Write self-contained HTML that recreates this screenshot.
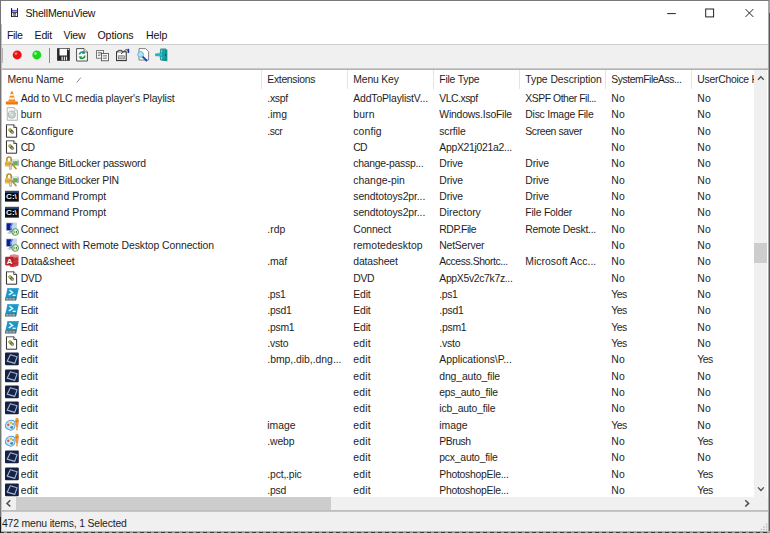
<!DOCTYPE html>
<html><head><meta charset="utf-8"><title>ShellMenuView</title>
<style>
html,body{margin:0;padding:0;}
body{width:770px;height:533px;overflow:hidden;position:relative;background:#fff;font-family:"Liberation Sans",sans-serif;color:#1e1e1e;}
.abs{position:absolute;}
.t{position:absolute;white-space:nowrap;line-height:1;font-size:10.4px;letter-spacing:-0.08px;}
.ic{position:absolute;width:13.8px;height:13.8px;}
.ic svg{width:100%;height:100%;display:block;overflow:visible;}
</style></head><body>

<div class="abs" style="left:0;top:0;width:770px;height:533px;background:#ffffff;"></div>
<div class="abs" style="left:10.8px;top:7.8px;width:7.4px;height:9.6px;"><svg viewBox="0 0 7.4 9.6" width="7.4" height="9.6" style="display:block"><rect x="0.6" y="1" width="6" height="8" fill="#fff"/><rect x="0.8" y="1.9" width="5.6" height="1.6" fill="#5c5ce0"/><rect x="0.8" y="3.9" width="5.6" height="0.9" fill="#20203a"/><rect x="0" y="0.1" width="1.1" height="9.2" fill="#16162a"/><rect x="6.1" y="0.1" width="1.1" height="9.2" fill="#16162a"/><rect x="2.1" y="5.6" width="3" height="2.6" fill="#8c8c8c"/><rect x="2.1" y="5.2" width="3" height="0.8" fill="#444"/><rect x="0" y="8.2" width="7.2" height="1.1" fill="#16162a"/></svg></div>
<div class="t" style="left:25.50px;top:8.00px;font-size:10.5px;letter-spacing:-0.189px;color:#111;">ShellMenuView</div>
<svg class="abs" style="left:650px;top:0" width="120" height="30" viewBox="0 0 120 30"><path d="M17.2 13.6 L25.8 13.6" stroke="#222" stroke-width="1"/><rect x="55.7" y="9.0" width="7.9" height="7.9" fill="none" stroke="#222" stroke-width="1"/><path d="M95.5 9.1 L103.3 16.9 M103.3 9.1 L95.5 16.9" stroke="#222" stroke-width="1"/></svg>
<div class="t" style="left:7.00px;top:30.00px;font-size:10.6px;letter-spacing:-0.418px;color:#111;">File</div>
<div class="t" style="left:34.60px;top:30.00px;font-size:10.6px;letter-spacing:-0.248px;color:#111;">Edit</div>
<div class="t" style="left:63.60px;top:30.00px;font-size:10.6px;letter-spacing:-0.263px;color:#111;">View</div>
<div class="t" style="left:97.40px;top:30.00px;font-size:10.6px;letter-spacing:-0.067px;color:#111;">Options</div>
<div class="t" style="left:146.00px;top:30.00px;font-size:10.6px;letter-spacing:-0.134px;color:#111;">Help</div>
<div class="abs" style="left:1px;top:44px;width:767px;height:1px;background:#cfcfcf;"></div>
<div class="abs" style="left:1px;top:45px;width:767px;height:23px;background:#f0f0f0;"></div>
<div class="abs" style="left:1px;top:68px;width:767px;height:1px;background:#c8c8c8;"></div><div class="abs" style="left:1px;top:69px;width:767px;height:1px;background:#b2b2b2;"></div>
<div class="abs" style="left:2.2px;top:47.6px;width:1px;height:15px;background:#b4b4b4;"></div>
<div class="abs" style="left:49.2px;top:47.6px;width:1px;height:15px;background:#8c8c8c;"></div>
<svg class="abs" style="left:0;top:45px" width="200" height="24" viewBox="0 45 200 24">
<circle cx="17.2" cy="54.9" r="4.5" fill="#ee1010"/><circle cx="15.9" cy="53.6" r="1.4" fill="#ff7d7d"/>
<circle cx="36.8" cy="54.9" r="4.5" fill="#17d81b"/><circle cx="35.5" cy="53.6" r="1.4" fill="#9dffa0"/>
<!-- save -->
<rect x="57.1" y="48.2" width="12.7" height="12.6" fill="#242424"/>
<rect x="59.5" y="48.8" width="7.5" height="6.7" fill="#fbfbfb"/>
<rect x="67.6" y="48.9" width="1.4" height="1.2" fill="#e8e8e8"/>
<rect x="61.5" y="56.6" width="1.3" height="3.7" fill="#e6e6e6"/><rect x="63.8" y="56.6" width="1.3" height="3.7" fill="#e6e6e6"/><rect x="66" y="56.6" width="1.1" height="3.7" fill="#e6e6e6"/>
<!-- refresh -->
<path d="M76.6 48.6 L84 48.6 L87.4 52 L87.4 61 L76.6 61 Z" fill="#ffffff" stroke="#3c3c3c" stroke-width="0.9"/>
<path d="M84 48.6 L84 52 L87.4 52" fill="#eee" stroke="#3c3c3c" stroke-width="0.7"/>
<path d="M79.4 54.6 A2.9 2.9 0 0 1 84 52.6" fill="none" stroke="#2b8fa3" stroke-width="1.7"/>
<path d="M84.8 55.4 A2.9 2.9 0 0 1 80 57.6" fill="none" stroke="#1f9a3c" stroke-width="1.7"/>
<path d="M83 50.6 L85.6 53.6 L82 54Z" fill="#1f9a3c"/><path d="M81 59.6 L78.4 56.6 L82 56.2Z" fill="#1f9a3c"/>
<!-- copy -->
<rect x="96.6" y="50.6" width="7" height="7.6" fill="#fff" stroke="#555" stroke-width="0.8"/>
<path d="M97.8 52.4 H102 M97.8 54 H102 M97.8 55.6 H100.4" stroke="#555" stroke-width="0.7"/>
<rect x="101.4" y="53.4" width="7" height="7.4" fill="#fff" stroke="#444" stroke-width="0.8"/>
<path d="M102.8 55.4 H107 M102.8 57 H107 M102.8 58.6 H107" stroke="#666" stroke-width="0.7"/>
<!-- properties -->
<rect x="116.6" y="51.8" width="9.6" height="8.8" fill="#fff" stroke="#222" stroke-width="1"/>
<path d="M118 51.8 L118 50.4 L122 50.4 L122 51.8" fill="#ddd" stroke="#222" stroke-width="0.8"/>
<rect x="118.4" y="55.8" width="6" height="3.2" fill="#bbb" stroke="#555" stroke-width="0.5"/>
<path d="M121 54 L126 49.6 L128.6 50.4" fill="none" stroke="#444" stroke-width="1"/>
<rect x="127.6" y="48.8" width="1.6" height="4.2" fill="#1b2fb0"/>
<!-- find -->
<path d="M139 48.6 L145.6 48.6 L148.6 51.6 L148.6 60 L139 60 Z" fill="#ffffff" stroke="#666" stroke-width="0.8"/>
<circle cx="140.6" cy="54.4" r="2.9" fill="#a9e6f2" stroke="#5aa7bf" stroke-width="0.8"/>
<path d="M142.6 56.6 L147 61" stroke="#1c45c8" stroke-width="2"/>
<!-- exit -->
<path d="M161.6 49 L167.4 49.8 L167.4 61.4 L161.6 60.2Z" fill="#17a3a8"/>
<path d="M160.6 49 L166 49 L166 60 L160.6 60Z" fill="none" stroke="#0c6f74" stroke-width="0.8"/>
<path d="M155.6 53.8 L160 53.8 L160 51.8 L163.4 54.8 L160 57.8 L160 55.8 L155.6 55.8Z" fill="#1fc2c8" stroke="#0d7f85" stroke-width="0.5"/>
<rect x="165" y="54" width="1" height="2" fill="#064f54"/>
</svg>
<div class="t" style="left:7.40px;top:75.00px;font-size:10.4px;letter-spacing:-0.032px;">Menu Name</div>
<svg class="abs" style="left:76px;top:76px" width="8" height="8" viewBox="0 0 8 8"><path d="M0.8 6.3 L4.8 1.6" stroke="#7c7c7c" stroke-width="0.9"/></svg>
<div class="abs" style="left:261.0px;top:70px;width:1px;height:19.4px;background:#e4e4e4;"></div>
<div class="t" style="left:267.30px;top:75.00px;font-size:10.4px;letter-spacing:-0.310px;">Extensions</div>
<div class="abs" style="left:347.0px;top:70px;width:1px;height:19.4px;background:#e4e4e4;"></div>
<div class="t" style="left:353.30px;top:75.00px;font-size:10.4px;letter-spacing:-0.172px;">Menu Key</div>
<div class="abs" style="left:433.0px;top:70px;width:1px;height:19.4px;background:#e4e4e4;"></div>
<div class="t" style="left:439.30px;top:75.00px;font-size:10.4px;letter-spacing:-0.216px;">File Type</div>
<div class="abs" style="left:519.0px;top:70px;width:1px;height:19.4px;background:#e4e4e4;"></div>
<div class="t" style="left:525.30px;top:75.00px;font-size:10.4px;letter-spacing:-0.066px;">Type Description</div>
<div class="abs" style="left:605.0px;top:70px;width:1px;height:19.4px;background:#e4e4e4;"></div>
<div class="t" style="left:611.30px;top:75.00px;font-size:10.4px;letter-spacing:-0.458px;">SystemFileAss...</div>
<div class="abs" style="left:691.0px;top:70px;width:1px;height:19.4px;background:#e4e4e4;"></div>
<div class="t" style="left:697.30px;top:75.00px;font-size:10.4px;letter-spacing:-0.272px;">UserChoice H</div>
<div class="ic" style="left:5.1px;top:90.90px;"><svg viewBox="0 0 16 16"><path d="M8 0.2 Q9 0.2 9.3 1.6 L12.3 12.4 L3.7 12.4 L6.7 1.6 Q7 0.2 8 0.2Z" fill="#f08a1c"/><path d="M6.3 3.4 L9.7 3.4 L10.3 5.4 L5.7 5.4Z" fill="#fdf1e2"/><path d="M5.1 7.6 L10.9 7.6 L11.5 9.8 L4.5 9.8Z" fill="#fdf1e2"/><path d="M1.8 12.2 L14.2 12.2 Q15 12.2 15 13 L15 15 Q15 15.8 14.2 15.8 L1.8 15.8 Q1 15.8 1 15 L1 13 Q1 12.2 1.8 12.2Z" fill="#e8780c"/><path d="M3.4 12.2 L12.6 12.2 L12.6 13.1 L3.4 13.1Z" fill="#f4a552"/></svg></div>
<div class="t" style="left:20.70px;top:94.00px;font-size:10.4px;letter-spacing:-0.135px;">Add to VLC media player's Playlist</div>
<div class="t" style="left:267.30px;top:94.00px;font-size:10.4px;letter-spacing:-0.269px;">.xspf</div>
<div class="t" style="left:353.30px;top:94.00px;font-size:10.4px;letter-spacing:-0.140px;">AddToPlaylistV...</div>
<div class="t" style="left:439.30px;top:94.00px;font-size:10.4px;letter-spacing:-0.489px;">VLC.xspf</div>
<div class="t" style="left:525.30px;top:94.00px;font-size:10.4px;letter-spacing:-0.457px;">XSPF Other Fil...</div>
<div class="t" style="left:611.30px;top:94.00px;font-size:10.4px;letter-spacing:0.222px;">No</div>
<div class="t" style="left:697.30px;top:94.00px;font-size:10.4px;letter-spacing:0.222px;">No</div>
<div class="ic" style="left:5.1px;top:107.23px;"><svg viewBox="0 0 16 16"><path d="M2.6 0.7 L10.8 0.7 L14.4 4.3 L14.4 15.4 L2.6 15.4 Z" fill="#f7f7f7" stroke="#a3a3a3" stroke-width="0.9"/><path d="M10.8 0.7 L10.8 4.3 L14.4 4.3" fill="#ececec" stroke="#b5b5b5" stroke-width="0.7"/><circle cx="7.9" cy="8.8" r="4.3" fill="#d0d3d5" stroke="#9ea3a6" stroke-width="0.8"/><circle cx="7.9" cy="8.8" r="1.4" fill="#ffffff" stroke="#a8a8a8" stroke-width="0.5"/><path d="M9.9 5.6 A4.3 4.3 0 0 1 12.1 8.8 L9.3 8.8Z" fill="#a9d4aa" opacity="0.8"/><path d="M4 7 A4.3 4.3 0 0 1 6.4 4.8 L7.4 7.6Z" fill="#ffffff" opacity="0.6"/></svg></div>
<div class="t" style="left:20.70px;top:110.00px;font-size:10.4px;letter-spacing:0.122px;">burn</div>
<div class="t" style="left:267.30px;top:110.00px;font-size:10.4px;letter-spacing:0.010px;">.img</div>
<div class="t" style="left:353.30px;top:110.00px;font-size:10.4px;letter-spacing:0.122px;">burn</div>
<div class="t" style="left:439.30px;top:110.00px;font-size:10.4px;letter-spacing:-0.202px;">Windows.IsoFile</div>
<div class="t" style="left:525.30px;top:110.00px;font-size:10.4px;letter-spacing:-0.227px;">Disc Image File</div>
<div class="t" style="left:611.30px;top:110.00px;font-size:10.4px;letter-spacing:0.222px;">No</div>
<div class="t" style="left:697.30px;top:110.00px;font-size:10.4px;letter-spacing:0.222px;">No</div>
<div class="ic" style="left:5.1px;top:123.57px;"><svg viewBox="0 0 16 16"><path d="M1.7 0.8 L10.2 0.8 L13.5 4.1 L13.5 15.3 L1.7 15.3 Z" fill="#ffffff" stroke="#2b2b2b" stroke-width="1.15"/><path d="M1.7 0.8 L10.2 0.8" stroke="#9a9a9a" stroke-width="1.2"/><path d="M10.2 0.8 L10.2 4.1 L13.5 4.1" fill="#fff" stroke="#2b2b2b" stroke-width="1"/><path d="M4.4 5.6 L6.8 5.2 L10.4 9 L9.6 11.2 L7.4 11 L4 7.6Z" fill="#5f5c24"/><circle cx="5.6" cy="6.7" r="1.6" fill="#b9b13a"/><path d="M7.4 8.6 L9.2 10.4" stroke="#bdbdbd" stroke-width="1.3"/></svg></div>
<div class="t" style="left:20.70px;top:127.00px;font-size:10.4px;letter-spacing:0.107px;">C&amp;onfigure</div>
<div class="t" style="left:267.30px;top:127.00px;font-size:10.4px;letter-spacing:-0.452px;">.scr</div>
<div class="t" style="left:353.30px;top:127.00px;font-size:10.4px;letter-spacing:0.111px;">config</div>
<div class="t" style="left:439.30px;top:127.00px;font-size:10.4px;letter-spacing:-0.119px;">scrfile</div>
<div class="t" style="left:525.30px;top:127.00px;font-size:10.4px;letter-spacing:-0.374px;">Screen saver</div>
<div class="t" style="left:611.30px;top:127.00px;font-size:10.4px;letter-spacing:0.222px;">No</div>
<div class="t" style="left:697.30px;top:127.00px;font-size:10.4px;letter-spacing:0.222px;">No</div>
<div class="ic" style="left:5.1px;top:139.90px;"><svg viewBox="0 0 16 16"><path d="M1.7 0.8 L10.2 0.8 L13.5 4.1 L13.5 15.3 L1.7 15.3 Z" fill="#ffffff" stroke="#2b2b2b" stroke-width="1.15"/><path d="M1.7 0.8 L10.2 0.8" stroke="#9a9a9a" stroke-width="1.2"/><path d="M10.2 0.8 L10.2 4.1 L13.5 4.1" fill="#fff" stroke="#2b2b2b" stroke-width="1"/><path d="M4.4 5.6 L6.8 5.2 L10.4 9 L9.6 11.2 L7.4 11 L4 7.6Z" fill="#5f5c24"/><circle cx="5.6" cy="6.7" r="1.6" fill="#b9b13a"/><path d="M7.4 8.6 L9.2 10.4" stroke="#bdbdbd" stroke-width="1.3"/></svg></div>
<div class="t" style="left:20.70px;top:143.00px;font-size:10.4px;letter-spacing:-0.708px;">CD</div>
<div class="t" style="left:353.30px;top:143.00px;font-size:10.4px;letter-spacing:-0.708px;">CD</div>
<div class="t" style="left:439.30px;top:143.00px;font-size:10.4px;letter-spacing:-0.284px;">AppX21j021a2...</div>
<div class="t" style="left:611.30px;top:143.00px;font-size:10.4px;letter-spacing:0.222px;">No</div>
<div class="t" style="left:697.30px;top:143.00px;font-size:10.4px;letter-spacing:0.222px;">No</div>
<div class="ic" style="left:5.1px;top:156.23px;"><svg viewBox="0 0 16 16"><path d="M2.2 6.8 L2.2 3.7 A2.5 2.5 0 0 1 7.2 3.7 L7.2 6.8" fill="none" stroke="#b58f35" stroke-width="1.9"/><rect x="-0.1" y="6.2" width="8.5" height="6" rx="0.7" fill="#e6bd45"/><rect x="-0.1" y="8.6" width="8.5" height="1.1" fill="#c4952a"/><rect x="8.3" y="3.6" width="7.5" height="8" rx="1" fill="#c3cacf"/><rect x="8.3" y="3.6" width="7.5" height="2.2" rx="1" fill="#e3e7ea"/><rect x="9.6" y="6.2" width="4.8" height="4.2" fill="#62b14f"/><rect x="14.6" y="5.2" width="1.2" height="6" fill="#8d979d"/><path d="M8.4 8.2 L14 14.8 L12.4 15.6 L7.6 10Z" fill="#b48d2a"/><path d="M5.2 9.6 L7.8 9.6 L7.6 15.4 L5.6 15.9 L4.9 13Z" fill="#d2d2d2" stroke="#7f7f7f" stroke-width="0.5"/></svg></div>
<div class="t" style="left:20.70px;top:159.00px;font-size:10.4px;letter-spacing:-0.193px;">Change BitLocker password</div>
<div class="t" style="left:353.30px;top:159.00px;font-size:10.4px;letter-spacing:-0.262px;">change-passp...</div>
<div class="t" style="left:439.30px;top:159.00px;font-size:10.4px;letter-spacing:-0.126px;">Drive</div>
<div class="t" style="left:525.30px;top:159.00px;font-size:10.4px;letter-spacing:-0.126px;">Drive</div>
<div class="t" style="left:611.30px;top:159.00px;font-size:10.4px;letter-spacing:0.222px;">No</div>
<div class="t" style="left:697.30px;top:159.00px;font-size:10.4px;letter-spacing:0.222px;">No</div>
<div class="ic" style="left:5.1px;top:172.56px;"><svg viewBox="0 0 16 16"><path d="M2.2 6.8 L2.2 3.7 A2.5 2.5 0 0 1 7.2 3.7 L7.2 6.8" fill="none" stroke="#b58f35" stroke-width="1.9"/><rect x="-0.1" y="6.2" width="8.5" height="6" rx="0.7" fill="#e6bd45"/><rect x="-0.1" y="8.6" width="8.5" height="1.1" fill="#c4952a"/><rect x="8.3" y="3.6" width="7.5" height="8" rx="1" fill="#c3cacf"/><rect x="8.3" y="3.6" width="7.5" height="2.2" rx="1" fill="#e3e7ea"/><rect x="9.6" y="6.2" width="4.8" height="4.2" fill="#62b14f"/><rect x="14.6" y="5.2" width="1.2" height="6" fill="#8d979d"/><path d="M8.4 8.2 L14 14.8 L12.4 15.6 L7.6 10Z" fill="#b48d2a"/><path d="M5.2 9.6 L7.8 9.6 L7.6 15.4 L5.6 15.9 L4.9 13Z" fill="#d2d2d2" stroke="#7f7f7f" stroke-width="0.5"/></svg></div>
<div class="t" style="left:20.70px;top:176.00px;font-size:10.4px;letter-spacing:-0.230px;">Change BitLocker PIN</div>
<div class="t" style="left:353.30px;top:176.00px;font-size:10.4px;letter-spacing:0.017px;">change-pin</div>
<div class="t" style="left:439.30px;top:176.00px;font-size:10.4px;letter-spacing:-0.126px;">Drive</div>
<div class="t" style="left:525.30px;top:176.00px;font-size:10.4px;letter-spacing:-0.126px;">Drive</div>
<div class="t" style="left:611.30px;top:176.00px;font-size:10.4px;letter-spacing:0.222px;">No</div>
<div class="t" style="left:697.30px;top:176.00px;font-size:10.4px;letter-spacing:0.222px;">No</div>
<div class="ic" style="left:5.1px;top:188.90px;"><svg viewBox="0 0 16 16"><rect x="0" y="2.2" width="16" height="12.4" fill="#0b0b0b"/><rect x="0" y="2.2" width="16" height="2.2" fill="#284a82"/><rect x="0" y="13.8" width="16" height="0.9" fill="#3d6db3"/><text x="1.3" y="12" font-family="'Liberation Sans',sans-serif" font-weight="bold" font-size="7.4" fill="#f2f2f2" textLength="12.4" lengthAdjust="spacingAndGlyphs">C:\</text></svg></div>
<div class="t" style="left:20.70px;top:192.00px;font-size:10.4px;letter-spacing:0.092px;">Command Prompt</div>
<div class="t" style="left:353.30px;top:192.00px;font-size:10.4px;letter-spacing:-0.090px;">sendtotoys2pr...</div>
<div class="t" style="left:439.30px;top:192.00px;font-size:10.4px;letter-spacing:-0.126px;">Drive</div>
<div class="t" style="left:525.30px;top:192.00px;font-size:10.4px;letter-spacing:-0.126px;">Drive</div>
<div class="t" style="left:611.30px;top:192.00px;font-size:10.4px;letter-spacing:0.222px;">No</div>
<div class="t" style="left:697.30px;top:192.00px;font-size:10.4px;letter-spacing:0.222px;">No</div>
<div class="ic" style="left:5.1px;top:205.23px;"><svg viewBox="0 0 16 16"><rect x="0" y="2.2" width="16" height="12.4" fill="#0b0b0b"/><rect x="0" y="2.2" width="16" height="2.2" fill="#284a82"/><rect x="0" y="13.8" width="16" height="0.9" fill="#3d6db3"/><text x="1.3" y="12" font-family="'Liberation Sans',sans-serif" font-weight="bold" font-size="7.4" fill="#f2f2f2" textLength="12.4" lengthAdjust="spacingAndGlyphs">C:\</text></svg></div>
<div class="t" style="left:20.70px;top:208.00px;font-size:10.4px;letter-spacing:0.092px;">Command Prompt</div>
<div class="t" style="left:353.30px;top:208.00px;font-size:10.4px;letter-spacing:-0.090px;">sendtotoys2pr...</div>
<div class="t" style="left:439.30px;top:208.00px;font-size:10.4px;letter-spacing:-0.007px;">Directory</div>
<div class="t" style="left:525.30px;top:208.00px;font-size:10.4px;letter-spacing:-0.208px;">File Folder</div>
<div class="t" style="left:611.30px;top:208.00px;font-size:10.4px;letter-spacing:0.222px;">No</div>
<div class="t" style="left:697.30px;top:208.00px;font-size:10.4px;letter-spacing:0.222px;">No</div>
<div class="ic" style="left:5.1px;top:221.56px;"><svg viewBox="0 0 16 16"><rect x="1" y="0.6" width="12.8" height="9.8" fill="#c9d2da"/><rect x="1.9" y="1.5" width="11" height="8" fill="#c3d4f0"/><path d="M1.9 1.5 L7.6 1.5 L5.8 5.6 L7 9.5 L1.9 9.5Z" fill="#0c1f9a"/><path d="M7.6 1.5 L9.4 1.5 L7.4 5.6 L8.4 9.5 L7 9.5 L5.8 5.6Z" fill="#4f78d8"/><rect x="5" y="10.4" width="4.6" height="1.6" fill="#8a949c"/><rect x="3" y="12" width="8.4" height="1.3" fill="#aab3ba"/><circle cx="11.9" cy="11.6" r="3.9" fill="#dcefd9" stroke="#4d8a46" stroke-width="1"/><path d="M9.6 10.2 L11.2 11.7 L9.6 13.2 M14.2 10.2 L12.6 11.7 L14.2 13.2" stroke="#2f7f2c" stroke-width="1.1" fill="none"/></svg></div>
<div class="t" style="left:20.70px;top:225.00px;font-size:10.4px;letter-spacing:-0.144px;">Connect</div>
<div class="t" style="left:267.30px;top:225.00px;font-size:10.4px;letter-spacing:0.007px;">.rdp</div>
<div class="t" style="left:353.30px;top:225.00px;font-size:10.4px;letter-spacing:-0.144px;">Connect</div>
<div class="t" style="left:439.30px;top:225.00px;font-size:10.4px;letter-spacing:-0.430px;">RDP.File</div>
<div class="t" style="left:525.30px;top:225.00px;font-size:10.4px;letter-spacing:-0.260px;">Remote Deskt...</div>
<div class="t" style="left:611.30px;top:225.00px;font-size:10.4px;letter-spacing:0.222px;">No</div>
<div class="t" style="left:697.30px;top:225.00px;font-size:10.4px;letter-spacing:0.222px;">No</div>
<div class="ic" style="left:5.1px;top:237.90px;"><svg viewBox="0 0 16 16"><rect x="1" y="0.6" width="12.8" height="9.8" fill="#c9d2da"/><rect x="1.9" y="1.5" width="11" height="8" fill="#c3d4f0"/><path d="M1.9 1.5 L7.6 1.5 L5.8 5.6 L7 9.5 L1.9 9.5Z" fill="#0c1f9a"/><path d="M7.6 1.5 L9.4 1.5 L7.4 5.6 L8.4 9.5 L7 9.5 L5.8 5.6Z" fill="#4f78d8"/><rect x="5" y="10.4" width="4.6" height="1.6" fill="#8a949c"/><rect x="3" y="12" width="8.4" height="1.3" fill="#aab3ba"/><circle cx="11.9" cy="11.6" r="3.9" fill="#dcefd9" stroke="#4d8a46" stroke-width="1"/><path d="M9.6 10.2 L11.2 11.7 L9.6 13.2 M14.2 10.2 L12.6 11.7 L14.2 13.2" stroke="#2f7f2c" stroke-width="1.1" fill="none"/></svg></div>
<div class="t" style="left:20.70px;top:241.00px;font-size:10.4px;letter-spacing:-0.066px;">Connect with Remote Desktop Connection</div>
<div class="t" style="left:353.30px;top:241.00px;font-size:10.4px;letter-spacing:0.043px;">remotedesktop</div>
<div class="t" style="left:439.30px;top:241.00px;font-size:10.4px;letter-spacing:-0.207px;">NetServer</div>
<div class="t" style="left:611.30px;top:241.00px;font-size:10.4px;letter-spacing:0.222px;">No</div>
<div class="t" style="left:697.30px;top:241.00px;font-size:10.4px;letter-spacing:0.222px;">No</div>
<div class="ic" style="left:5.1px;top:254.23px;"><svg viewBox="0 0 16 16"><path d="M5.6 1.6 Q10.6 -0.2 15.6 1.8 L15.6 13.4 Q10.6 16 5.6 14.4Z" fill="#cd3840"/><ellipse cx="10.6" cy="2.4" rx="5" ry="1.7" fill="#e6858a"/><path d="M5.6 6.2 Q10.6 8 15.6 6.2 M5.6 10.2 Q10.6 12 15.6 10.2" stroke="#a9222a" stroke-width="0.8" fill="none"/><rect x="0.2" y="3.2" width="9.6" height="10" rx="0.9" fill="#b5222a"/><text x="1.9" y="11.6" font-family="'Liberation Sans',sans-serif" font-weight="bold" font-size="9" fill="#ffffff">A</text></svg></div>
<div class="t" style="left:20.70px;top:257.00px;font-size:10.4px;letter-spacing:-0.041px;">Data&amp;sheet</div>
<div class="t" style="left:267.30px;top:257.00px;font-size:10.4px;letter-spacing:-0.159px;">.maf</div>
<div class="t" style="left:353.30px;top:257.00px;font-size:10.4px;letter-spacing:-0.129px;">datasheet</div>
<div class="t" style="left:439.30px;top:257.00px;font-size:10.4px;letter-spacing:-0.419px;">Access.Shortc...</div>
<div class="t" style="left:525.30px;top:257.00px;font-size:10.4px;letter-spacing:0.034px;">Microsoft Acc...</div>
<div class="t" style="left:611.30px;top:257.00px;font-size:10.4px;letter-spacing:0.222px;">No</div>
<div class="t" style="left:697.30px;top:257.00px;font-size:10.4px;letter-spacing:0.222px;">No</div>
<div class="ic" style="left:5.1px;top:270.56px;"><svg viewBox="0 0 16 16"><path d="M1.7 0.8 L10.2 0.8 L13.5 4.1 L13.5 15.3 L1.7 15.3 Z" fill="#ffffff" stroke="#2b2b2b" stroke-width="1.15"/><path d="M1.7 0.8 L10.2 0.8" stroke="#9a9a9a" stroke-width="1.2"/><path d="M10.2 0.8 L10.2 4.1 L13.5 4.1" fill="#fff" stroke="#2b2b2b" stroke-width="1"/><path d="M4.4 5.6 L6.8 5.2 L10.4 9 L9.6 11.2 L7.4 11 L4 7.6Z" fill="#5f5c24"/><circle cx="5.6" cy="6.7" r="1.6" fill="#b9b13a"/><path d="M7.4 8.6 L9.2 10.4" stroke="#bdbdbd" stroke-width="1.3"/></svg></div>
<div class="t" style="left:20.70px;top:274.00px;font-size:10.4px;letter-spacing:-0.367px;">DVD</div>
<div class="t" style="left:353.30px;top:274.00px;font-size:10.4px;letter-spacing:-0.367px;">DVD</div>
<div class="t" style="left:439.30px;top:274.00px;font-size:10.4px;letter-spacing:-0.318px;">AppX5v2c7k7z...</div>
<div class="t" style="left:611.30px;top:274.00px;font-size:10.4px;letter-spacing:0.222px;">No</div>
<div class="t" style="left:697.30px;top:274.00px;font-size:10.4px;letter-spacing:0.222px;">No</div>
<div class="ic" style="left:5.1px;top:286.90px;"><svg viewBox="0 0 16 16"><path d="M3 1.2 L16 1.2 L13.8 11.6 L0.6 11.6Z" fill="#1c96c4"/><path d="M3 1.2 L16 1.2 L15.7 2.5 L2.7 2.5Z" fill="#37a9d4"/><path d="M5.2 3.6 L8.8 6.4 L4.4 9.2" fill="none" stroke="#e8fbff" stroke-width="1.6"/><path d="M8.8 9.6 L12.4 9.6" stroke="#e8fbff" stroke-width="1.5"/><path d="M0.6 11.6 L13.8 11.6 L12.9 15.7 L-0.2 15.7Z" fill="#4b616b"/><path d="M1.3 12.6 L12 12.6 L11.6 14.7 L0.9 14.7Z" fill="#93aab4"/><path d="M4.6 12.5 L4.4 14.8 M8.2 12.5 L8 14.8" stroke="#4b616b" stroke-width="0.9"/></svg></div>
<div class="t" style="left:20.70px;top:290.00px;font-size:10.4px;letter-spacing:-0.161px;">Edit</div>
<div class="t" style="left:267.30px;top:290.00px;font-size:10.4px;letter-spacing:-0.357px;">.ps1</div>
<div class="t" style="left:353.30px;top:290.00px;font-size:10.4px;letter-spacing:-0.161px;">Edit</div>
<div class="t" style="left:439.30px;top:290.00px;font-size:10.4px;letter-spacing:-0.357px;">.ps1</div>
<div class="t" style="left:611.30px;top:290.00px;font-size:10.4px;letter-spacing:-0.501px;">Yes</div>
<div class="t" style="left:697.30px;top:290.00px;font-size:10.4px;letter-spacing:0.222px;">No</div>
<div class="ic" style="left:5.1px;top:303.23px;"><svg viewBox="0 0 16 16"><path d="M3 1.2 L16 1.2 L13.8 11.6 L0.6 11.6Z" fill="#1c96c4"/><path d="M3 1.2 L16 1.2 L15.7 2.5 L2.7 2.5Z" fill="#37a9d4"/><path d="M5.2 3.6 L8.8 6.4 L4.4 9.2" fill="none" stroke="#e8fbff" stroke-width="1.6"/><path d="M8.8 9.6 L12.4 9.6" stroke="#e8fbff" stroke-width="1.5"/><path d="M0.6 11.6 L13.8 11.6 L12.9 15.7 L-0.2 15.7Z" fill="#4b616b"/><path d="M1.3 12.6 L12 12.6 L11.6 14.7 L0.9 14.7Z" fill="#93aab4"/><path d="M4.6 12.5 L4.4 14.8 M8.2 12.5 L8 14.8" stroke="#4b616b" stroke-width="0.9"/></svg></div>
<div class="t" style="left:20.70px;top:306.00px;font-size:10.4px;letter-spacing:-0.161px;">Edit</div>
<div class="t" style="left:267.30px;top:306.00px;font-size:10.4px;letter-spacing:-0.229px;">.psd1</div>
<div class="t" style="left:353.30px;top:306.00px;font-size:10.4px;letter-spacing:-0.161px;">Edit</div>
<div class="t" style="left:439.30px;top:306.00px;font-size:10.4px;letter-spacing:-0.229px;">.psd1</div>
<div class="t" style="left:611.30px;top:306.00px;font-size:10.4px;letter-spacing:-0.501px;">Yes</div>
<div class="t" style="left:697.30px;top:306.00px;font-size:10.4px;letter-spacing:0.222px;">No</div>
<div class="ic" style="left:5.1px;top:319.56px;"><svg viewBox="0 0 16 16"><path d="M3 1.2 L16 1.2 L13.8 11.6 L0.6 11.6Z" fill="#1c96c4"/><path d="M3 1.2 L16 1.2 L15.7 2.5 L2.7 2.5Z" fill="#37a9d4"/><path d="M5.2 3.6 L8.8 6.4 L4.4 9.2" fill="none" stroke="#e8fbff" stroke-width="1.6"/><path d="M8.8 9.6 L12.4 9.6" stroke="#e8fbff" stroke-width="1.5"/><path d="M0.6 11.6 L13.8 11.6 L12.9 15.7 L-0.2 15.7Z" fill="#4b616b"/><path d="M1.3 12.6 L12 12.6 L11.6 14.7 L0.9 14.7Z" fill="#93aab4"/><path d="M4.6 12.5 L4.4 14.8 M8.2 12.5 L8 14.8" stroke="#4b616b" stroke-width="0.9"/></svg></div>
<div class="t" style="left:20.70px;top:323.00px;font-size:10.4px;letter-spacing:-0.161px;">Edit</div>
<div class="t" style="left:267.30px;top:323.00px;font-size:10.4px;letter-spacing:-0.240px;">.psm1</div>
<div class="t" style="left:353.30px;top:323.00px;font-size:10.4px;letter-spacing:-0.161px;">Edit</div>
<div class="t" style="left:439.30px;top:323.00px;font-size:10.4px;letter-spacing:-0.240px;">.psm1</div>
<div class="t" style="left:611.30px;top:323.00px;font-size:10.4px;letter-spacing:-0.501px;">Yes</div>
<div class="t" style="left:697.30px;top:323.00px;font-size:10.4px;letter-spacing:0.222px;">No</div>
<div class="ic" style="left:5.1px;top:335.89px;"><svg viewBox="0 0 16 16"><path d="M1.7 0.8 L10.2 0.8 L13.5 4.1 L13.5 15.3 L1.7 15.3 Z" fill="#ffffff" stroke="#2b2b2b" stroke-width="1.15"/><path d="M1.7 0.8 L10.2 0.8" stroke="#9a9a9a" stroke-width="1.2"/><path d="M10.2 0.8 L10.2 4.1 L13.5 4.1" fill="#fff" stroke="#2b2b2b" stroke-width="1"/><path d="M4.4 5.6 L6.8 5.2 L10.4 9 L9.6 11.2 L7.4 11 L4 7.6Z" fill="#5f5c24"/><circle cx="5.6" cy="6.7" r="1.6" fill="#b9b13a"/><path d="M7.4 8.6 L9.2 10.4" stroke="#bdbdbd" stroke-width="1.3"/></svg></div>
<div class="t" style="left:20.70px;top:339.00px;font-size:10.4px;letter-spacing:0.168px;">edit</div>
<div class="t" style="left:267.30px;top:339.00px;font-size:10.4px;letter-spacing:-0.178px;">.vsto</div>
<div class="t" style="left:353.30px;top:339.00px;font-size:10.4px;letter-spacing:0.168px;">edit</div>
<div class="t" style="left:439.30px;top:339.00px;font-size:10.4px;letter-spacing:-0.178px;">.vsto</div>
<div class="t" style="left:611.30px;top:339.00px;font-size:10.4px;letter-spacing:-0.501px;">Yes</div>
<div class="t" style="left:697.30px;top:339.00px;font-size:10.4px;letter-spacing:0.222px;">No</div>
<div class="ic" style="left:5.1px;top:352.23px;"><svg viewBox="0 0 16 16"><rect x="0" y="0.5" width="16" height="14.9" rx="1.2" fill="#1b2041"/><path d="M6.2 3.2 L14 5.5 L11.3 13.2 L2.5 10.6Z" fill="none" stroke="#96bbe0" stroke-width="1.3" stroke-linejoin="round"/></svg></div>
<div class="t" style="left:20.70px;top:355.00px;font-size:10.4px;letter-spacing:0.168px;">edit</div>
<div class="t" style="left:267.30px;top:355.00px;font-size:10.4px;letter-spacing:-0.019px;">.bmp,.dib,.dng...</div>
<div class="t" style="left:353.30px;top:355.00px;font-size:10.4px;letter-spacing:0.168px;">edit</div>
<div class="t" style="left:439.30px;top:355.00px;font-size:10.4px;letter-spacing:-0.043px;">Applications\P...</div>
<div class="t" style="left:611.30px;top:355.00px;font-size:10.4px;letter-spacing:0.222px;">No</div>
<div class="t" style="left:697.30px;top:355.00px;font-size:10.4px;letter-spacing:-0.501px;">Yes</div>
<div class="ic" style="left:5.1px;top:368.56px;"><svg viewBox="0 0 16 16"><rect x="0" y="0.5" width="16" height="14.9" rx="1.2" fill="#1b2041"/><path d="M6.2 3.2 L14 5.5 L11.3 13.2 L2.5 10.6Z" fill="none" stroke="#96bbe0" stroke-width="1.3" stroke-linejoin="round"/></svg></div>
<div class="t" style="left:20.70px;top:372.00px;font-size:10.4px;letter-spacing:0.168px;">edit</div>
<div class="t" style="left:353.30px;top:372.00px;font-size:10.4px;letter-spacing:0.168px;">edit</div>
<div class="t" style="left:439.30px;top:372.00px;font-size:10.4px;letter-spacing:-0.132px;">dng_auto_file</div>
<div class="t" style="left:611.30px;top:372.00px;font-size:10.4px;letter-spacing:0.222px;">No</div>
<div class="t" style="left:697.30px;top:372.00px;font-size:10.4px;letter-spacing:0.222px;">No</div>
<div class="ic" style="left:5.1px;top:384.89px;"><svg viewBox="0 0 16 16"><rect x="0" y="0.5" width="16" height="14.9" rx="1.2" fill="#1b2041"/><path d="M6.2 3.2 L14 5.5 L11.3 13.2 L2.5 10.6Z" fill="none" stroke="#96bbe0" stroke-width="1.3" stroke-linejoin="round"/></svg></div>
<div class="t" style="left:20.70px;top:388.00px;font-size:10.4px;letter-spacing:0.168px;">edit</div>
<div class="t" style="left:353.30px;top:388.00px;font-size:10.4px;letter-spacing:0.168px;">edit</div>
<div class="t" style="left:439.30px;top:388.00px;font-size:10.4px;letter-spacing:-0.252px;">eps_auto_file</div>
<div class="t" style="left:611.30px;top:388.00px;font-size:10.4px;letter-spacing:0.222px;">No</div>
<div class="t" style="left:697.30px;top:388.00px;font-size:10.4px;letter-spacing:0.222px;">No</div>
<div class="ic" style="left:5.1px;top:401.23px;"><svg viewBox="0 0 16 16"><rect x="0" y="0.5" width="16" height="14.9" rx="1.2" fill="#1b2041"/><path d="M6.2 3.2 L14 5.5 L11.3 13.2 L2.5 10.6Z" fill="none" stroke="#96bbe0" stroke-width="1.3" stroke-linejoin="round"/></svg></div>
<div class="t" style="left:20.70px;top:404.00px;font-size:10.4px;letter-spacing:0.168px;">edit</div>
<div class="t" style="left:353.30px;top:404.00px;font-size:10.4px;letter-spacing:0.168px;">edit</div>
<div class="t" style="left:439.30px;top:404.00px;font-size:10.4px;letter-spacing:-0.178px;">icb_auto_file</div>
<div class="t" style="left:611.30px;top:404.00px;font-size:10.4px;letter-spacing:0.222px;">No</div>
<div class="t" style="left:697.30px;top:404.00px;font-size:10.4px;letter-spacing:0.222px;">No</div>
<div class="ic" style="left:5.1px;top:417.56px;"><svg viewBox="0 0 16 16"><path d="M0.5 9.2 C0.5 4.8 4.2 2.6 7.8 2.6 C11 2.6 12 4.8 11.8 7.2 C11.6 10 10.4 14.2 6.4 14.2 C5.2 14.2 4.8 13.2 4 13 C2.4 12.6 0.5 12 0.5 9.2Z" fill="#dde7ef" stroke="#4f9fd6" stroke-width="1.2"/><circle cx="3.8" cy="7.8" r="1.4" fill="#d9584e"/><circle cx="6.8" cy="5.6" r="1.4" fill="#e2bf3e"/><circle cx="9.4" cy="7" r="1.2" fill="#6ab35e"/><circle cx="7.8" cy="10.9" r="1.7" fill="#3f86d8"/><circle cx="3.7" cy="10.7" r="1" fill="#ffffff" stroke="#86b8de" stroke-width="0.5"/><path d="M12.3 0 L15.5 0 L15.9 3.4 L14.9 13.2 Q13.9 15.6 13 13.2 L11.9 3.4Z" fill="#f0963a"/><path d="M12 2.8 L15.8 2.8 L15.7 4.4 L12.1 4.4Z" fill="#c8742a"/><path d="M13 10.4 L15.2 10.4 L14.9 13.2 Q13.9 15.6 13 13.2Z" fill="#eab988"/></svg></div>
<div class="t" style="left:20.70px;top:421.00px;font-size:10.4px;letter-spacing:0.168px;">edit</div>
<div class="t" style="left:267.30px;top:421.00px;font-size:10.4px;letter-spacing:-0.048px;">image</div>
<div class="t" style="left:353.30px;top:421.00px;font-size:10.4px;letter-spacing:0.168px;">edit</div>
<div class="t" style="left:439.30px;top:421.00px;font-size:10.4px;letter-spacing:-0.048px;">image</div>
<div class="t" style="left:611.30px;top:421.00px;font-size:10.4px;letter-spacing:-0.501px;">Yes</div>
<div class="t" style="left:697.30px;top:421.00px;font-size:10.4px;letter-spacing:0.222px;">No</div>
<div class="ic" style="left:5.1px;top:433.89px;"><svg viewBox="0 0 16 16"><path d="M0.5 9.2 C0.5 4.8 4.2 2.6 7.8 2.6 C11 2.6 12 4.8 11.8 7.2 C11.6 10 10.4 14.2 6.4 14.2 C5.2 14.2 4.8 13.2 4 13 C2.4 12.6 0.5 12 0.5 9.2Z" fill="#dde7ef" stroke="#4f9fd6" stroke-width="1.2"/><circle cx="3.8" cy="7.8" r="1.4" fill="#d9584e"/><circle cx="6.8" cy="5.6" r="1.4" fill="#e2bf3e"/><circle cx="9.4" cy="7" r="1.2" fill="#6ab35e"/><circle cx="7.8" cy="10.9" r="1.7" fill="#3f86d8"/><circle cx="3.7" cy="10.7" r="1" fill="#ffffff" stroke="#86b8de" stroke-width="0.5"/><path d="M12.3 0 L15.5 0 L15.9 3.4 L14.9 13.2 Q13.9 15.6 13 13.2 L11.9 3.4Z" fill="#f0963a"/><path d="M12 2.8 L15.8 2.8 L15.7 4.4 L12.1 4.4Z" fill="#c8742a"/><path d="M13 10.4 L15.2 10.4 L14.9 13.2 Q13.9 15.6 13 13.2Z" fill="#eab988"/></svg></div>
<div class="t" style="left:20.70px;top:437.00px;font-size:10.4px;letter-spacing:0.168px;">edit</div>
<div class="t" style="left:267.30px;top:437.00px;font-size:10.4px;letter-spacing:-0.114px;">.webp</div>
<div class="t" style="left:353.30px;top:437.00px;font-size:10.4px;letter-spacing:0.168px;">edit</div>
<div class="t" style="left:439.30px;top:437.00px;font-size:10.4px;letter-spacing:-0.466px;">PBrush</div>
<div class="t" style="left:611.30px;top:437.00px;font-size:10.4px;letter-spacing:0.222px;">No</div>
<div class="t" style="left:697.30px;top:437.00px;font-size:10.4px;letter-spacing:-0.501px;">Yes</div>
<div class="ic" style="left:5.1px;top:450.23px;"><svg viewBox="0 0 16 16"><rect x="0" y="0.5" width="16" height="14.9" rx="1.2" fill="#1b2041"/><path d="M6.2 3.2 L14 5.5 L11.3 13.2 L2.5 10.6Z" fill="none" stroke="#96bbe0" stroke-width="1.3" stroke-linejoin="round"/></svg></div>
<div class="t" style="left:20.70px;top:453.00px;font-size:10.4px;letter-spacing:0.168px;">edit</div>
<div class="t" style="left:353.30px;top:453.00px;font-size:10.4px;letter-spacing:0.168px;">edit</div>
<div class="t" style="left:439.30px;top:453.00px;font-size:10.4px;letter-spacing:-0.227px;">pcx_auto_file</div>
<div class="t" style="left:611.30px;top:453.00px;font-size:10.4px;letter-spacing:0.222px;">No</div>
<div class="t" style="left:697.30px;top:453.00px;font-size:10.4px;letter-spacing:0.222px;">No</div>
<div class="ic" style="left:5.1px;top:466.56px;"><svg viewBox="0 0 16 16"><rect x="0" y="0.5" width="16" height="14.9" rx="1.2" fill="#1b2041"/><path d="M6.2 3.2 L14 5.5 L11.3 13.2 L2.5 10.6Z" fill="none" stroke="#96bbe0" stroke-width="1.3" stroke-linejoin="round"/></svg></div>
<div class="t" style="left:20.70px;top:470.00px;font-size:10.4px;letter-spacing:0.168px;">edit</div>
<div class="t" style="left:267.30px;top:470.00px;font-size:10.4px;letter-spacing:-0.167px;">.pct,.pic</div>
<div class="t" style="left:353.30px;top:470.00px;font-size:10.4px;letter-spacing:0.168px;">edit</div>
<div class="t" style="left:439.30px;top:470.00px;font-size:10.4px;letter-spacing:-0.276px;">PhotoshopEle...</div>
<div class="t" style="left:611.30px;top:470.00px;font-size:10.4px;letter-spacing:0.222px;">No</div>
<div class="t" style="left:697.30px;top:470.00px;font-size:10.4px;letter-spacing:-0.501px;">Yes</div>
<div class="ic" style="left:5.1px;top:482.89px;"><svg viewBox="0 0 16 16"><rect x="0" y="0.5" width="16" height="14.9" rx="1.2" fill="#1b2041"/><path d="M6.2 3.2 L14 5.5 L11.3 13.2 L2.5 10.6Z" fill="none" stroke="#96bbe0" stroke-width="1.3" stroke-linejoin="round"/></svg></div>
<div class="t" style="left:20.70px;top:486.00px;font-size:10.4px;letter-spacing:0.168px;">edit</div>
<div class="t" style="left:267.30px;top:486.00px;font-size:10.4px;letter-spacing:-0.229px;">.psd</div>
<div class="t" style="left:353.30px;top:486.00px;font-size:10.4px;letter-spacing:0.168px;">edit</div>
<div class="t" style="left:439.30px;top:486.00px;font-size:10.4px;letter-spacing:-0.276px;">PhotoshopEle...</div>
<div class="t" style="left:611.30px;top:486.00px;font-size:10.4px;letter-spacing:0.222px;">No</div>
<div class="t" style="left:697.30px;top:486.00px;font-size:10.4px;letter-spacing:-0.501px;">Yes</div>
<div class="abs" style="left:754px;top:70px;width:13px;height:427px;background:#f0f0f0;"></div>
<div class="abs" style="left:754px;top:243px;width:13px;height:20px;background:#cdcdcd;"></div>
<svg class="abs" style="left:754.4px;top:69.5px" width="13.7" height="427.3" viewBox="0 0 13.7 427.3"><path d="M4 9.6 L6.9 6.5 L9.8 9.6" fill="none" stroke="#505050" stroke-width="1.3"/><path d="M4 417.6 L6.9 420.7 L9.8 417.6" fill="none" stroke="#505050" stroke-width="1.3"/></svg>
<div class="abs" style="left:1px;top:497px;width:767px;height:13px;background:#f0f0f0;"></div>
<div class="abs" style="left:16px;top:497px;width:315px;height:13px;background:#cdcdcd;"></div>
<svg class="abs" style="left:0px;top:496px" width="770" height="15" viewBox="0 0 770 15"><path d="M10.3 4.3 L7 7.4 L10.3 10.5" fill="none" stroke="#4c4c4c" stroke-width="1.5"/><path d="M745.3 4.3 L748.6 7.4 L745.3 10.5" fill="none" stroke="#4c4c4c" stroke-width="1.5"/></svg>
<div class="abs" style="left:1px;top:512px;width:767px;height:19px;background:#f0f0f0;"></div>
<div class="abs" style="left:1px;top:510px;width:767px;height:1px;background:#bebebe;"></div><div class="abs" style="left:1px;top:511px;width:767px;height:1px;background:#c6c6c6;"></div>
<div class="t" style="left:2.00px;top:519.00px;font-size:10.4px;letter-spacing:-0.158px;">472 menu items, 1 Selected</div>
<svg class="abs" style="left:756px;top:520px" width="12" height="12" viewBox="756 520 12 12"><g fill="#bdbdbd"><rect x="765.8" y="523.7" width="1.5" height="1.5"/><rect x="763.2" y="526.2" width="1.5" height="1.5"/><rect x="765.8" y="526.2" width="1.5" height="1.5"/><rect x="760.6" y="528.8" width="1.5" height="1.5"/><rect x="763.2" y="528.8" width="1.5" height="1.5"/><rect x="765.8" y="528.8" width="1.5" height="1.5"/></g></svg>
<div class="abs" style="left:0;top:0;width:770px;height:1px;background:#7a7a7a;"></div>
<div class="abs" style="left:0;top:0;width:1px;height:533px;background:#747474;"></div>
<div class="abs" style="left:1px;top:24px;width:1px;height:507px;background:#c2c2c2;"></div>
<div class="abs" style="left:768px;top:1px;width:1px;height:532px;background:#a8a8a8;"></div>
<div class="abs" style="left:769px;top:0;width:1px;height:13px;background:#a0a0a0;"></div>
<div class="abs" style="left:769px;top:13px;width:1px;height:520px;background:#585858;"></div>
<div class="abs" style="left:0;top:531px;width:770px;height:1px;background:#b4b4b4;"></div>
<div class="abs" style="left:0;top:532px;width:770px;height:1px;background:repeating-linear-gradient(90deg,#3a3a3a 0,#3a3a3a 4px,#9a9a9a 4px,#9a9a9a 7px);"></div>
<div class="abs" style="left:0;top:517px;width:1px;height:16px;background:#1a1a1a;"></div>
</body></html>
